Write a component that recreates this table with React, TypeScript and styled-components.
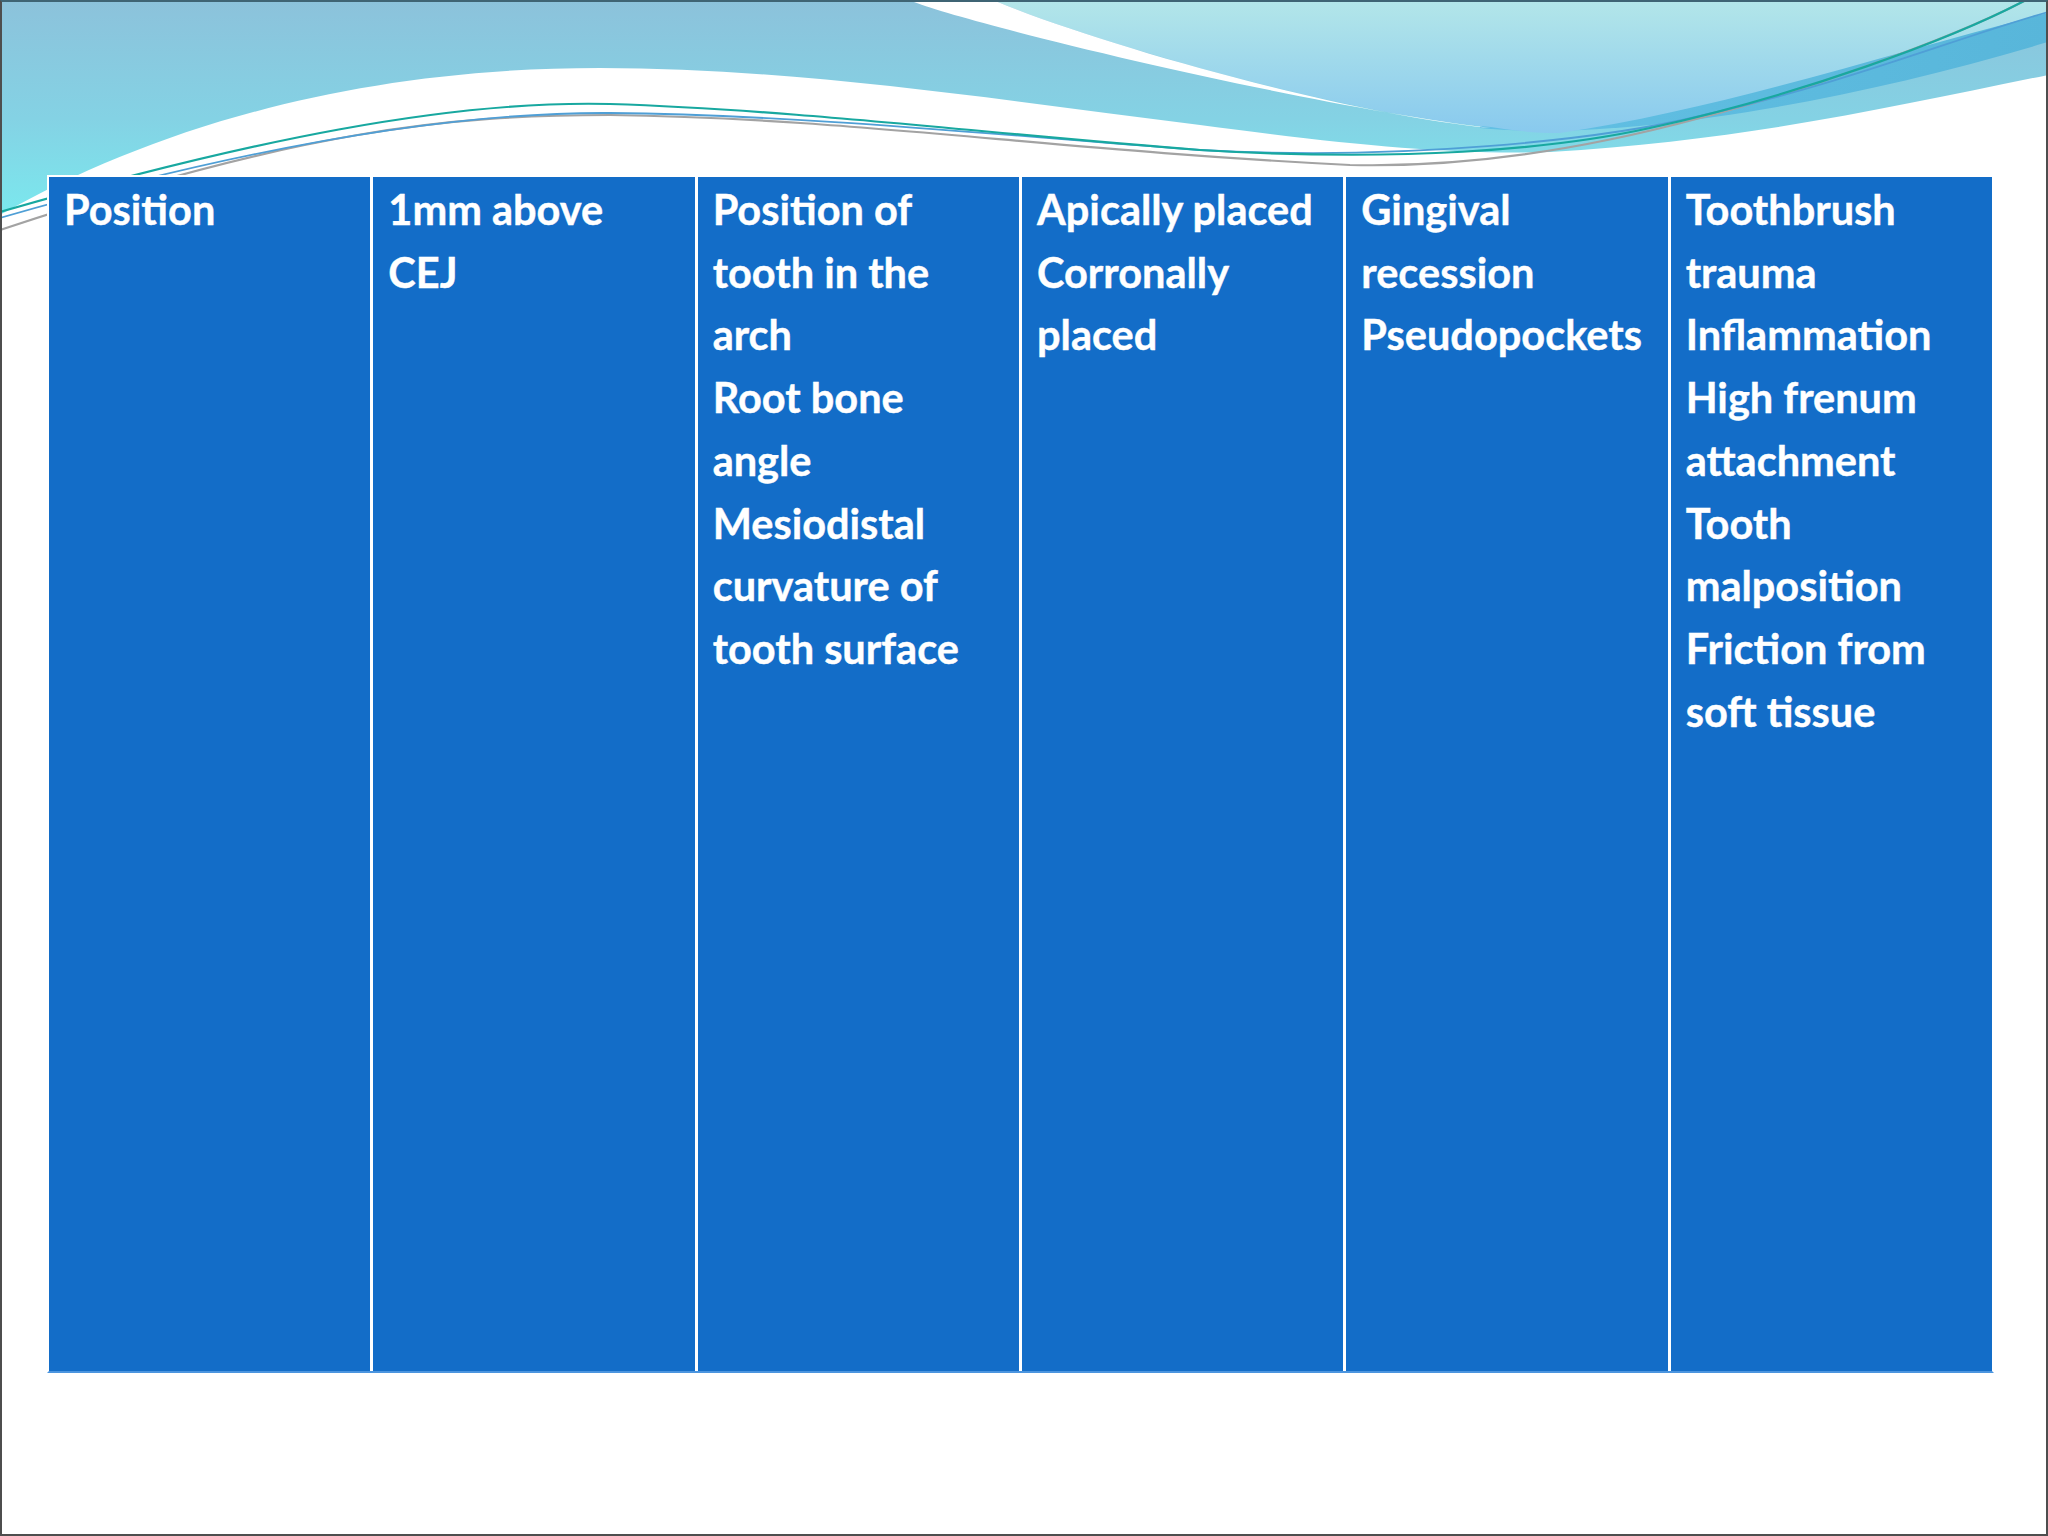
import styled, { createGlobalStyle } from 'styled-components'

const GlobalStyle = createGlobalStyle`
  html, body {
    margin: 0;
    padding: 0;
    background: #ffffff;
  }
  * {
    box-sizing: border-box;
  }
`

const columns: string[][] = [
  ['Position'],
  ['1mm above', 'CEJ'],
  ['Position of', 'tooth in the', 'arch', 'Root bone', 'angle', 'Mesiodistal', 'curvature of', 'tooth surface'],
  ['Apically placed', 'Corronally', 'placed'],
  ['Gingival', 'recession', 'Pseudopockets'],
  [
    'Toothbrush',
    'trauma',
    'Inflammation',
    'High frenum',
    'attachment',
    'Tooth',
    'malposition',
    'Friction from',
    'soft tissue',
  ],
]

// decorative header swoosh, drawn in page coordinates
const Wave = () => (
  <WaveSvg viewBox="2 2 2044 240" preserveAspectRatio="none">
    <defs>
      <linearGradient id="leftFill" x1="0" y1="0" x2="0" y2="215" gradientUnits="userSpaceOnUse">
        <stop offset="0" stopColor="#8cc2db" />
        <stop offset="0.55" stopColor="#84d2e4" />
        <stop offset="1" stopColor="#7be8ee" />
      </linearGradient>
      <linearGradient id="rightFill" x1="0" y1="0" x2="0" y2="135" gradientUnits="userSpaceOnUse">
        <stop offset="0" stopColor="#b3e6e9" />
        <stop offset="1" stopColor="#88c9ee" />
      </linearGradient>
      <linearGradient id="midBand" x1="1480" y1="0" x2="2048" y2="0" gradientUnits="userSpaceOnUse">
        <stop offset="0" stopColor="#62c0e4" />
        <stop offset="1" stopColor="#58b6da" />
      </linearGradient>
    </defs>

    <path
      d="M0,0 L2048,0 L2048,75 C1900,105 1750,140 1550,152 C1450,155 1350,145 1200,125 C1000,100 800,68 600,68 C350,68 150,130 0,215 Z"
      fill="url(#leftFill)"
    />
    <path d="M1480,128 C1620,142 1850,102 2048,42 L2048,0 L1480,0 Z" fill="url(#midBand)" />
    <path
      d="M993,0 L2048,0 L2048,13 C1900,50 1720,110 1560,133 C1530,133 1510,130 1491,127 C1350,115 1100,45 993,0 Z"
      fill="url(#rightFill)"
    />
    <path d="M909,0 C960,22 1300,105 1491,128 C1350,115 1100,45 993,0 Z" fill="#ffffff" />

    <path
      d="M0,230 C300,130 450,115 610,115 C850,118 1050,150 1350,165 C1480,168 1600,145 1700,118 C1800,92 1950,40 2026,0"
      fill="none"
      stroke="#a3a3a3"
      strokeWidth="2.2"
    />
    <path
      d="M0,218 C250,146 450,112 610,113 C800,115 1000,135 1200,150 C1400,161 1600,140 1700,116 C1850,82 1950,40 2048,12"
      fill="none"
      stroke="#4f9fd6"
      strokeWidth="1.8"
    />
    <path
      d="M0,212 C250,140 450,100 610,104 C800,110 1000,135 1200,150 C1400,162 1550,150 1650,128 C1800,95 1950,40 2026,0"
      fill="none"
      stroke="#18a8a0"
      strokeWidth="2.2"
    />
  </WaveSvg>
)

const App = () => {
  return (
    <>
      <GlobalStyle />
      <Slide>
        <Wave />
        <Table>
          {columns.map((lines, i) => (
            <Cell key={i}>
              {lines.map((line) => (
                <Line key={line}>{line}</Line>
              ))}
            </Cell>
          ))}
        </Table>
      </Slide>
    </>
  )
}

export default App

const Slide = styled.div`
  position: relative;
  width: 2048px;
  height: 1536px;
  border: 2px solid #4e4e4e;
  border-top-color: #3f6474;
  background: #ffffff;
  padding: 173px 0 0 45px;
  overflow: hidden;
`

const WaveSvg = styled.svg`
  position: absolute;
  top: 0;
  left: 0;
  width: 2044px;
  height: 240px;
  z-index: 0;
`

const Table = styled.div`
  position: relative;
  z-index: 1;
  display: grid;
  grid-template-columns: repeat(6, 1fr);
  gap: 3px;
  width: 1947px;
  height: 1198px;
  background: #ffffff;
  border: 2px solid #ffffff;
  border-bottom-color: #4b95df;
`

const Cell = styled.div`
  background: #136dc8;
  padding: 1px 10px 0 15px;
  display: flex;
  flex-direction: column;
`

const Line = styled.span`
  display: block;
  white-space: nowrap;
  font-family: Lato, 'Noto Sans', sans-serif;
  font-weight: 700;
  font-size: 41.5px;
  line-height: 62.7px;
  color: #ffffff;
  -webkit-text-stroke: 0.4px #ffffff;
`
